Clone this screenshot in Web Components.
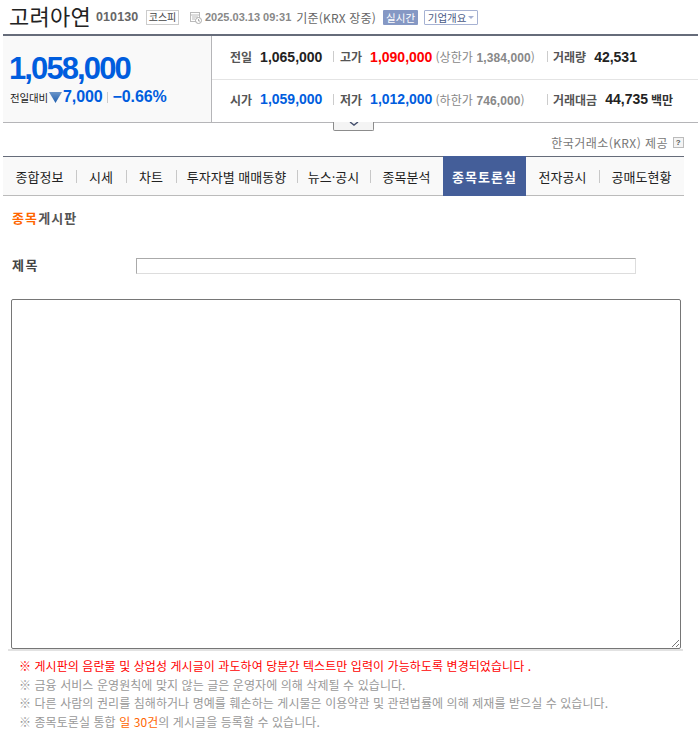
<!DOCTYPE html>
<html lang="ko">
<head>
<meta charset="utf-8">
<title>고려아연</title>
<style>
  html, body { margin: 0; padding: 0; background: #fff; }
  body { width: 698px; font-family: "Liberation Sans", "Noto Sans CJK KR", sans-serif; font-size: 12px; color: #333; }
</style>
</head>
<body>
<stock-head></stock-head>
<stock-summary></stock-summary>
<stock-tabs></stock-tabs>
<board-form></board-form>
<board-notes></board-notes>

<script>
class StockHead extends HTMLElement {
  constructor() {
    super();
    this.shadowDOM = this.attachShadow({ mode: 'open' });
    this.shadowDOM.innerHTML = `
    <style>
    :host { display: flex; align-items: center; height: 34px; padding-left: 9px; box-sizing: border-box; white-space: nowrap; }
    h1 { margin: 0; font: 400 22px/30px "Noto Sans CJK KR", sans-serif; color: #222; letter-spacing: 0.3px; width: 83px; height: 34px; }
    .code { margin-left: 4px; width: 42px; font: 700 12.5px "Liberation Sans", sans-serif; color: #666; letter-spacing: .1px; }
    .mkt { margin-left: 8px; width: 31px; height: 13px; line-height: 12px; border: 1px solid #ccc; text-align: center; font-size: 10px; color: #444; font-family: "Noto Sans CJK KR", sans-serif; }
    .cal { margin-left: 11px; width: 12px; height: 14px; }
    .date { margin-left: 3px; font: 700 11px "Liberation Sans", sans-serif; color: #888; }
    .base { margin-left: 5px; font: 400 12px "Noto Sans CJK KR", sans-serif; color: #666; letter-spacing: .2px; }
    .live { margin-left: 7px; width: 35px; height: 15px; background: #8598c4; color: #fff; text-align: center; font: 400 10.5px/15px "Noto Sans CJK KR", sans-serif; border-radius: 1px; }
    .info { margin-left: 6px; width: 52px; height: 13px; border: 1px solid #a6b2d3; border-radius: 1px; color: #4a5a85; font: 400 10.5px/13px "Noto Sans CJK KR", sans-serif; display: flex; align-items: center; justify-content: center; gap: 2px; }
    .info i { width: 0; height: 0; border: 3px solid transparent; border-top: 3px solid #a6b2d3; border-bottom: 0; }
    </style>
    <h1>고려아연</h1>
    <span class="code">010130</span>
    <span class="mkt">코스피</span>
    <svg class="cal" viewBox="0 0 12 14"><rect x=".5" y="2.5" width="9" height="9" fill="#fff" stroke="#bbb"/><path d="M.5 5h9M2 7h6M2 9h3" stroke="#bbb"/><circle cx="8.5" cy="10.5" r="3" fill="#fff" stroke="#aaa"/><path d="M8.5 9v2h1.5" stroke="#aaa" fill="none"/></svg>
    <span class="date">2025.03.13 09:31</span>
    <span class="base">기준(KRX 장중)</span>
    <span class="live">실시간</span>
    <span class="info">기업개요<i></i></span>
    `;
  }
}

class StockSummary extends HTMLElement {
  constructor() {
    super();
    this.shadowDOM = this.attachShadow({ mode: 'open' });
    this.shadowDOM.innerHTML = `
    <style>
    :host { display: block; position: relative; margin-left: 3px; border-top: 2px solid #666c7a; border-bottom: 1px solid #b5b5b8; height: 86px; white-space: nowrap; }
    .wrap { display: flex; height: 86px; }
    .now { width: 202px; background: #f9f9f9; border-right: 1px solid #b5b5b8; padding-left: 6px; }
    .price { margin-top: 15px; font: 700 31px/36px "Liberation Sans", sans-serif; color: #005dde; letter-spacing: -1.9px; }
    .chg { display: flex; align-items: center; height: 20px; color: #005dde; }
    .chg .lb { font: 400 10.5px "Noto Sans CJK KR", sans-serif; color: #222; width: 39px; letter-spacing: -.2px; margin-left: 1px; }
    .chg svg { width: 13px; height: 13px; margin-right: 1px; }
    .chg b { font: 700 16px "Liberation Sans", sans-serif; letter-spacing: -.1px; }
    .chg u { width: 1px; height: 11px; background: #ccc; margin: 0 5px 0 4px; }
    .rows { flex: 1; display: grid; grid-template-rows: 43px 43px; }
    .row { display: flex; align-items: center; padding: 0 0 2px 18px; font-size: 12px; }
    .row + .row { border-top: 1px solid #e4e4e4; padding-bottom: 4px; }
    .lb2 { font: 700 12px "Noto Sans CJK KR", sans-serif; color: #555; }
    .v { font: 700 14px "Liberation Sans", sans-serif; color: #222; margin-left: 8px; }
    .b { color: #005dde; } .r { color: #f00; }
    .sep { width: 1px; height: 11px; background: #ccc; }
    .lim { font: 400 12px "Noto Sans CJK KR", "Liberation Sans", sans-serif; color: #888; margin-left: 3px; letter-spacing: .1px; }
    .lim em { font: 700 12px "Liberation Sans", sans-serif; color: #888; }
    .c1 { display: flex; align-items: center; width: 103px; }
    .c2 { display: flex; align-items: center; width: 213px; padding-left: 6px; box-sizing: border-box; }
    .c3 { display: flex; align-items: center; padding-left: 5px; }
    .unit { font: 700 12px "Noto Sans CJK KR", sans-serif; color: #333; margin-left: 3px; }
    .toggle { position: absolute; left: 330px; top: 86px; width: 39px; height: 8px; background: #f4f4f4; border: 1px solid #8c8c8c; border-top: 0; border-radius: 0 0 2px 2px; display: flex; justify-content: center; }
    </style>
    <div class="wrap">
      <div class="now">
        <div class="price">1,058,000</div>
        <div class="chg"><span class="lb">전일대비</span>
          <svg viewBox="0 0 13 13"><defs><linearGradient id="dn" x1="0" y1="0" x2="0" y2="1"><stop offset="0" stop-color="#6c95c8"/><stop offset="1" stop-color="#1e5fb0"/></linearGradient></defs><path d="M0 1h13L6.5 12z" fill="url(#dn)"/></svg>
          <b>7,000</b><u></u><b>−0.66%</b></div>
      </div>
      <div class="rows">
        <div class="row">
          <div class="c1"><span class="lb2">전일</span><span class="v">1,065,000</span></div>
          <div class="sep"></div>
          <div class="c2"><span class="lb2">고가</span><span class="v r">1,090,000</span><span class="lim">(상한가 <em>1,384,000</em>)</span></div>
          <div class="sep"></div>
          <div class="c3"><span class="lb2">거래량</span><span class="v">42,531</span></div>
        </div>
        <div class="row">
          <div class="c1"><span class="lb2">시가</span><span class="v b">1,059,000</span></div>
          <div class="sep"></div>
          <div class="c2"><span class="lb2">저가</span><span class="v b">1,012,000</span><span class="lim">(하한가 <em>746,000</em>)</span></div>
          <div class="sep"></div>
          <div class="c3"><span class="lb2">거래대금</span><span class="v">44,735</span><span class="unit">백만</span></div>
        </div>
      </div>
    </div>
    <div class="toggle"><svg width="12" height="6" viewBox="0 0 12 6"><path d="M2 0l4 3 4-3" fill="none" stroke="#45506e" stroke-width="1.4"/></svg></div>
    `;
  }
}

class StockTabs extends HTMLElement {
  constructor() {
    super();
    this.shadowDOM = this.attachShadow({ mode: 'open' });
    const tabs = [['종합정보', 73], ['시세', 50], ['차트', 50], ['투자자별 매매동향', 121], ['뉴스·공시', 73], ['종목분석', 73], ['종목토론실', 83, true], ['전자공시', 73], ['공매도현황', 85]];
    this.shadowDOM.innerHTML = `
    <style>
    :host { display: block; margin: 0 14px 0 3px; }
    .provider { height: 33px; display: flex; justify-content: flex-end; align-items: center; gap: 5px; font: 400 12px "Noto Sans CJK KR", sans-serif; color: #777; letter-spacing: .45px; padding-top: 6px; box-sizing: border-box; }
    .provider i { width: 9px; height: 9px; border: 1px solid #bbb; background: #f4f4f4; font: 700 8px/9px "Liberation Sans", sans-serif; text-align: center; color: #555; }
    ul { list-style: none; margin: 0; padding: 0; display: flex; height: 38px; background: #f9f9f9; border-top: 1px solid #666c7a; border-bottom: 1px solid #bbb; }
    li { position: relative; display: flex; align-items: center; justify-content: center; font: 400 13px "Noto Sans CJK KR", sans-serif; color: #222; white-space: nowrap; box-sizing: border-box; }
    li + li::before { content: ""; position: absolute; left: 0; top: 13px; width: 1px; height: 13px; background: #c8c8c8; }
    li.on { background: #445e99; color: #fff; font-weight: 700; letter-spacing: 1px; margin: -1px 0; height: 40px; }
    li.on::before, li.on + li::before { display: none; }
    </style>
    <div class="provider"><span>한국거래소(KRX) 제공</span><i>?</i></div>
    <ul>${tabs.map(t => `<li class="${t[2] ? 'on' : ''}" style="width:${t[1]}px">${t[0]}</li>`).join('')}</ul>
    `;
  }
}

class BoardForm extends HTMLElement {
  constructor() {
    super();
    this.shadowDOM = this.attachShadow({ mode: 'open' });
    this.shadowDOM.innerHTML = `
    <style>
    :host { display: block; padding: 0 0 0 11px; }
    h2 { margin: 0; padding: 12px 0 0 1px; height: 41px; font: 700 13px/19px "Noto Sans CJK KR", sans-serif; color: #555; letter-spacing: 1.1px; }
    h2 em { font-style: normal; color: #f60; }
    .subject { display: flex; align-items: center; height: 16px; margin-top: 9px; }
    label { width: 124px; padding-left: 1px; margin-top: -4px; font: 700 13px "Noto Sans CJK KR", sans-serif; color: #444; letter-spacing: 1.5px; }
    .inp { width: 500px; height: 16px; box-sizing: border-box; border: 1px solid #aaa; border-right-color: #ddd; border-bottom-color: #ddd; background: #fff; }
    .area { position: relative; margin-top: 25px; width: 670px; height: 350px; box-sizing: border-box; border: 1px solid #767676; border-radius: 2px; background: #fff; }
    .area svg { position: absolute; right: 0; bottom: 0; }
    .line { height: 2px; margin: 0 15px 0 -3px; background: #e2e2e2; }
    </style>
    <h2><em>종목</em>게시판</h2>
    <div class="subject"><label>제목</label><div class="inp"></div></div>
    <div class="area"><svg width="9" height="9" viewBox="0 0 9 9"><path d="M1 8l7-7M5 8l3-3" stroke="#777" fill="none"/></svg></div>
    <div class="line"></div>
    `;
  }
}

class BoardNotes extends HTMLElement {
  constructor() {
    super();
    this.shadowDOM = this.attachShadow({ mode: 'open' });
    this.shadowDOM.innerHTML = `
    <style>
    :host { display: block; padding: 6px 0 0 19px; font: 400 12px/18.7px "Noto Sans CJK KR", sans-serif; color: #999; white-space: nowrap; letter-spacing: .07px; }
    .red { color: #f00; }
    em { font-style: normal; color: #f60; }
    p { margin: 0; height: 18.7px; }
    </style>
    <p class="red">※ 게시판의 음란물 및 상업성 게시글이 과도하여 당분간 텍스트만 입력이 가능하도록 변경되었습니다 .</p>
    <p>※ 금융 서비스 운영원칙에 맞지 않는 글은 운영자에 의해 삭제될 수 있습니다.</p>
    <p>※ 다른 사람의 권리를 침해하거나 명예를 훼손하는 게시물은 이용약관 및 관련법률에 의해 제재를 받으실 수 있습니다.</p>
    <p>※ 종목토론실 통합 <em>일 30건</em>의 게시글을 등록할 수 있습니다.</p>
    `;
  }
}

customElements.define('stock-head', StockHead);
customElements.define('stock-summary', StockSummary);
customElements.define('stock-tabs', StockTabs);
customElements.define('board-form', BoardForm);
customElements.define('board-notes', BoardNotes);
</script>
</body>
</html>
